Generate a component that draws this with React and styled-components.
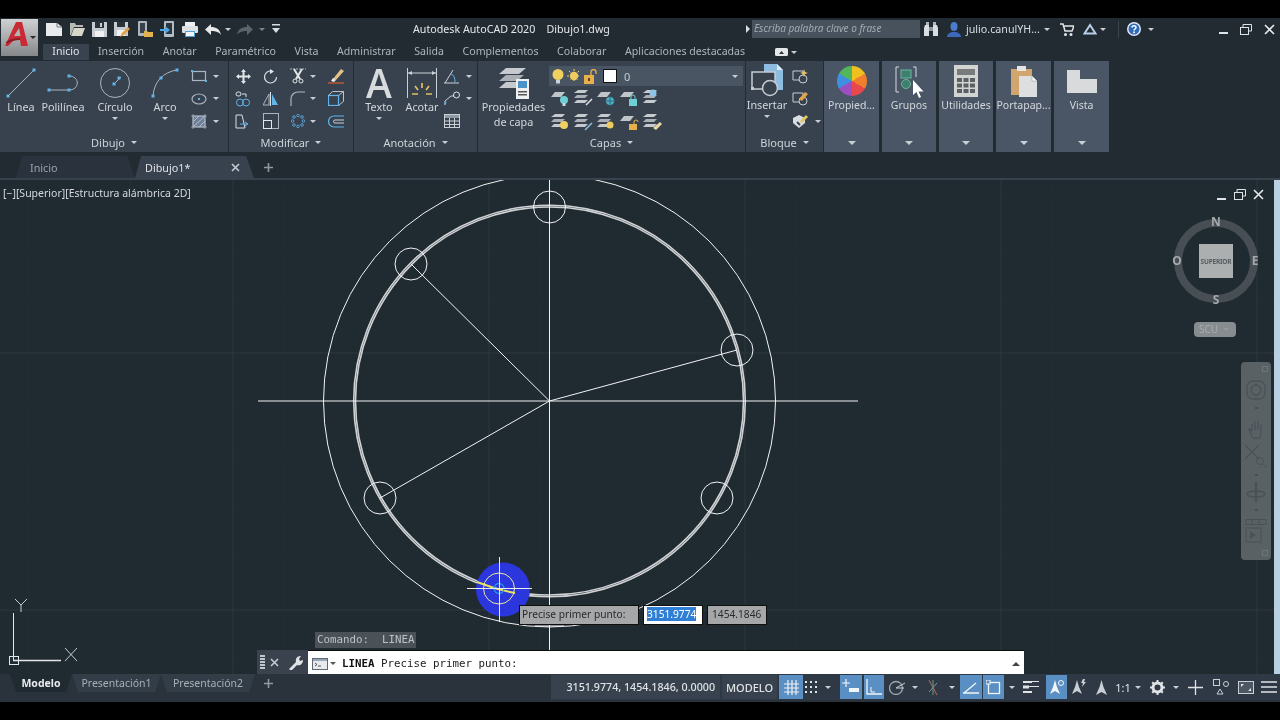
import React from "react";
import styled, { createGlobalStyle } from "styled-components";

const GlobalStyle = createGlobalStyle`
  html, body { margin: 0; padding: 0; background: #000; }
`;

const Root = styled.div`
  width: 1280px;
  height: 720px;
  background: #000;
  display: flex;
  flex-direction: column;
  overflow: hidden;
  position: relative;
  font-family: "Noto Sans", "Open Sans", sans-serif;
  font-size: 11px;
  color: #d4d9de;
  filter: blur(0.3px);
`;

const TopBlack = styled.div`
  height: 18px;
  flex: none;
`;

const BottomBlack = styled.div`
  flex: 1;
`;

/* ---------- drawing helper ---------- */
const Svg = styled.svg`
  display: block;
  flex: none;
`;

const Pic = ({ w, h, children }) => (
  <Svg width={w} height={h} viewBox={`0 0 ${w} ${h}`} fill="none">
    {children}
  </Svg>
);

const Caret = styled.span`
  display: inline-block;
  flex: none;
  width: 0;
  height: 0;
  border-left: 3px solid transparent;
  border-right: 3px solid transparent;
  border-top: 3px solid ${(p) => p.$c || "#c8ced4"};
`;

const Slot = styled.div`
  width: ${(p) => p.$w}px;
  margin-left: ${(p) => p.$ml || 0}px;
  flex: none;
  height: 100%;
  display: flex;
  align-items: center;
  justify-content: center;
`;

/* ---------- app button ---------- */
const AppButton = styled.div`
  position: absolute;
  left: 1px;
  top: 19px;
  width: 37px;
  height: 37px;
  background: linear-gradient(#cfd0d1, #85888a);
  padding: 3px 0 0 4px;
  box-sizing: border-box;
`;

const AppCaret = styled(Caret)`
  position: absolute;
  right: 2px;
  top: 17px;
  border-top-color: #2b2b2b;
`;

/* ---------- title bar ---------- */
const TitleBar = styled.div`
  height: 26px;
  flex: none;
  background: #222b32;
  display: flex;
  align-items: center;
  padding: 0 0 4px 43px;
  box-sizing: border-box;
`;

const TitleText = styled.div`
  width: 332px;
  margin-left: 127px;
  flex: none;
  font-size: 10.7px;
  color: #e4e7ea;
  white-space: pre;
`;

const SearchBox = styled.div`
  width: 168px;
  height: 18px;
  flex: none;
  background: #47525c;
  color: #a3abb3;
  font-style: italic;
  font-size: 10px;
  line-height: 17px;
  padding-left: 2px;
  box-sizing: border-box;
  white-space: nowrap;
`;

const UserName = styled.div`
  width: 78px;
  flex: none;
  font-size: 10.7px;
  color: #d8dde2;
  white-space: nowrap;
`;

const TitleRule = styled.div`
  width: 1px;
  height: 17px;
  background: #3b4550;
  flex: none;
`;

const Arrow = styled.span`
  width: 0;
  height: 0;
  border-top: 4px solid transparent;
  border-bottom: 4px solid transparent;
  border-left: 4px solid #d8dde2;
`;

/* ---------- ribbon tabs ---------- */
const MenuRow = styled.div`
  height: 16px;
  flex: none;
  background: #222b32;
  display: flex;
  align-items: stretch;
  padding-left: 43px;
`;

const MenuTab = styled.div`
  padding: 0 9.3px;
  background: ${(p) => (p.$active ? "#394350" : "transparent")};
  color: ${(p) => (p.$active ? "#e2e6ea" : "#aeb6bd")};
  font-size: 10.6px;
  line-height: 14px;
  white-space: nowrap;
`;

/* ---------- ribbon ---------- */
const Ribbon = styled.div`
  height: 92px;
  flex: none;
  background: #222b32;
  display: flex;
  padding-top: 1px;
  box-sizing: border-box;
`;

const Panel = styled.div`
  width: ${(p) => p.$w}px;
  margin-right: 1px;
  flex: none;
  background: #38424f;
  display: flex;
  flex-direction: column;
`;

const PanelBody = styled.div`
  height: 74px;
  flex: none;
  display: flex;
`;

const PanelTitle = styled.div`
  flex: 1;
  display: flex;
  align-items: center;
  justify-content: center;
  gap: 6px;
  font-size: 11px;
  color: #ccd2d8;
  padding-bottom: 3px;
`;

const Tool = styled.div`
  width: ${(p) => p.$w}px;
  flex: none;
  display: flex;
  flex-direction: column;
  align-items: center;
  padding-top: ${(p) => p.$top ?? 5}px;
  box-sizing: border-box;
`;

const ToolIcon = styled.div`
  height: 33px;
  display: flex;
  align-items: center;
  justify-content: center;
`;

const ToolLabel = styled.div`
  font-size: 10.8px;
  line-height: 15px;
  color: #d2d7dc;
  text-align: center;
  white-space: nowrap;
`;

const ToolCaret = styled(Caret)`
  margin-top: 3px;
`;

const BigLetter = styled.div`
  font-family: "Open Sans", sans-serif;
  font-size: 39px;
  font-weight: 600;
  line-height: 33px;
  color: #d8dbde;
`;

const SmallGrid = styled.div`
  width: ${(p) => p.$w}px;
  flex: none;
  display: grid;
  grid-template-columns: ${(p) => p.$cols};
  grid-auto-rows: 22.5px;
  padding-top: 4px;
  box-sizing: border-box;
  justify-items: center;
  align-items: center;
`;

const LayerColumn = styled.div`
  flex: 1;
  display: flex;
  flex-direction: column;
  padding: 5px 2px 0 0;
`;

const LayerCombo = styled.div`
  height: 20px;
  background: #4a5563;
  display: flex;
  align-items: center;
  padding: 0 5px 0 3px;
  gap: 3px;
  font-size: 11px;
  color: #c6ccd2;
`;

const ColorSwatch = styled.div`
  width: 12px;
  height: 12px;
  background: #fff;
  border: 1px solid #111;
  margin: 0 4px 0 2px;
`;

const ComboCaret = styled(Caret)`
  margin-left: auto;
`;

const LayerRow = styled.div`
  height: 24px;
  display: flex;
  align-items: center;
  padding-left: 2px;
  gap: 3px;
`;

const Collapsed = styled.div`
  width: ${(p) => p.$w}px;
  margin-right: ${(p) => p.$mr ?? 3}px;
  flex: none;
  background: #4a5666;
  display: flex;
  flex-direction: column;
  align-items: center;
  padding-top: 4px;
  box-sizing: border-box;
`;

const CollapsedIcon = styled.div`
  height: 32px;
  display: flex;
  align-items: center;
  justify-content: center;
`;

const CollapsedLabel = styled.div`
  font-size: 10.5px;
  line-height: 16px;
  color: #d2d7dc;
  white-space: nowrap;
`;

const CollapsedCaret = styled(Caret)`
  margin-top: auto;
  margin-bottom: 7px;
  border-left-width: 4px;
  border-right-width: 4px;
  border-top-width: 4px;
`;

const Wheel = styled.div`
  width: 30px;
  height: 30px;
  border-radius: 50%;
  background: conic-gradient(
    #f0c020 0 60deg,
    #ef7f2c 60deg 120deg,
    #e8484c 120deg 180deg,
    #9b4fc0 180deg 240deg,
    #3f8fe0 240deg 300deg,
    #52b65a 300deg 360deg
  );
`;

/* ---------- document tabs ---------- */
const DocRow = styled.div`
  height: 28px;
  flex: none;
  background: #222b32;
  border-bottom: 2px solid #38424f;
  box-sizing: border-box;
  display: flex;
  align-items: flex-end;
  padding-left: 16px;
`;

const DocTab = styled.div`
  width: ${(p) => p.$w}px;
  height: 22px;
  flex: none;
  display: flex;
  align-items: center;
  justify-content: space-between;
  padding: 0 14px 0 ${(p) => p.$pl || 14}px;
  box-sizing: border-box;
  background: ${(p) => (p.$active ? "#38424f" : "#2a333d")};
  color: ${(p) => (p.$active ? "#dfe3e7" : "#9aa3ab")};
  font-size: 10.8px;
  clip-path: polygon(6px 0, calc(100% - 8px) 0, 100% 100%, 0 100%);
`;

const PlusGlyph = styled.div`
  flex: none;
  width: 28px;
  height: 22px;
  display: flex;
  align-items: center;
  justify-content: center;
`;

/* ---------- viewport ---------- */
const Viewport = styled.div`
  height: 494px;
  flex: none;
  position: relative;
  background: #202a31;
  overflow: hidden;
`;

const Canvas = styled.svg`
  position: absolute;
  left: 0;
  top: 0;
`;

const ScrollEdge = styled.div`
  position: absolute;
  right: 0;
  top: 0;
  bottom: 0;
  width: 6px;
  background: #b9cfe3;
`;

const ViewLabel = styled.div`
  position: absolute;
  left: 3px;
  top: 6px;
  font-size: 10.5px;
  line-height: 15px;
  color: #d4d9de;
  white-space: nowrap;
`;

const ViewControls = styled.div`
  position: absolute;
  left: 1217px;
  top: 9px;
  display: flex;
  gap: 7px;
  align-items: center;
`;

const Compass = styled.div`
  position: absolute;
  left: 1174px;
  top: 39px;
  width: 84px;
  height: 84px;
  border-radius: 50%;
  border: 8px solid #474f55;
  box-sizing: border-box;
`;

const CubeFace = styled.div`
  position: absolute;
  left: 17px;
  top: 17px;
  width: 34px;
  height: 34px;
  background: #abafaf;
  color: #565c60;
  font-size: 6.5px;
  font-weight: 700;
  display: flex;
  align-items: center;
  justify-content: center;
  letter-spacing: -0.2px;
`;

const CompassMark = styled.div`
  position: absolute;
  left: ${(p) => p.$x}px;
  top: ${(p) => p.$y}px;
  width: 16px;
  height: 16px;
  transform: translate(-50%, -50%);
  text-align: center;
  font-size: 12px;
  line-height: 16px;
  font-weight: 700;
  color: #a4a9ab;
`;

const ScuBox = styled.div`
  position: absolute;
  left: 1194px;
  top: 142px;
  width: 42px;
  height: 15px;
  border-radius: 4px;
  background: #868c8f;
  color: #a9aeb0;
  font-size: 10px;
  line-height: 15px;
  padding-left: 5px;
  box-sizing: border-box;
  display: flex;
  align-items: center;
  gap: 5px;
`;

const NavBar = styled.div`
  position: absolute;
  left: 1241px;
  top: 182px;
  width: 30px;
  height: 198px;
  border-radius: 4px;
  background: #596165;
  display: flex;
  flex-direction: column;
  align-items: center;
  padding-top: 18px;
  box-sizing: border-box;
`;

const NavItem = styled.div`
  margin-top: ${(p) => p.$mt || 0}px;
  flex: none;
`;

const NavDot = styled.div`
  width: 3px;
  height: 2px;
  margin-top: ${(p) => p.$mt || 0}px;
  background: #464e53;
  flex: none;
`;

const NavCorner = styled.div`
  position: absolute;
  right: 3px;
  width: 6px;
  height: 6px;
  border: 1px solid #6d7579;
  box-sizing: border-box;
  ${(p) => (p.$bottom ? "bottom: 4px;" : "top: 4px;")}
`;

const Tooltip = styled.div`
  position: absolute;
  top: 425px;
  left: ${(p) => p.$x}px;
  width: ${(p) => p.$w}px;
  height: 20px;
  box-sizing: border-box;
  background: ${(p) => (p.$input ? "#fff" : "#a5a7a8")};
  border: 1px solid #0f0f0f;
  color: #2a2a2a;
  font-size: 10.2px;
  line-height: 16px;
  padding-left: ${(p) => p.$pad ?? 2}px;
  white-space: nowrap;
`;

const Selected = styled.span`
  background: #2f7fd6;
  color: #fff;
`;

const History = styled.div`
  position: absolute;
  left: 315px;
  top: 452px;
  width: 101px;
  height: 16px;
  background: #4a5257;
  color: #bcc1c4;
  font-family: "DejaVu Sans Mono", monospace;
  font-size: 10.8px;
  line-height: 16px;
  padding-left: 2px;
  box-sizing: border-box;
  white-space: pre;
`;

const CommandBar = styled.div`
  position: absolute;
  left: 257px;
  bottom: 0;
  width: 767px;
  height: 24px;
  display: flex;
`;

const CommandTools = styled.div`
  width: 51px;
  flex: none;
  background: #39424d;
  display: flex;
  align-items: center;
  padding-left: 3px;
  gap: 5px;
  box-sizing: border-box;
`;

const CommandInput = styled.div`
  flex: 1;
  background: #fff;
  border-top: 1px solid #0c0c0c;
  display: flex;
  align-items: center;
  padding: 2px 4px 0;
  font-family: "DejaVu Sans Mono", monospace;
  font-size: 10.8px;
  color: #222;
  white-space: pre;
`;

const CommandCaret = styled(Caret)`
  margin: 0 6px 0 2px;
`;

const Strong = styled.b`
  color: #111;
`;

const ArrowUp = styled.span`
  margin-left: auto;
  width: 0;
  height: 0;
  border-left: 4px solid transparent;
  border-right: 4px solid transparent;
  border-bottom: 4px solid #444;
`;

/* ---------- layout tabs + status ---------- */
const BottomRow = styled.div`
  height: 28px;
  flex: none;
  background: #2a333c;
  display: flex;
  position: relative;
`;

const LayoutTabs = styled.div`
  width: 551px;
  flex: none;
  display: flex;
  align-items: flex-start;
  padding-left: 10px;
  box-sizing: border-box;
`;

const LayoutTab = styled.div`
  width: ${(p) => p.$w}px;
  height: 18px;
  flex: none;
  text-align: center;
  font-size: 10.5px;
  line-height: 18px;
  font-weight: ${(p) => (p.$active ? 700 : 400)};
  color: ${(p) => (p.$active ? "#e9ecef" : "#a7afb6")};
  background: ${(p) => (p.$active ? "#202a31" : "#333d48")};
  clip-path: polygon(0 0, 100% 0, calc(100% - 6px) 100%, 6px 100%);
`;

const LayoutPlus = styled(Slot)`
  height: 18px;
`;

const StatusBar = styled.div`
  flex: 1;
  height: 26px;
  background: #2f3945;
  display: flex;
  align-items: center;
`;

const Stat = styled.div`
  width: ${(p) => p.$w}px;
  margin-left: ${(p) => p.$ml || 0}px;
  height: 24px;
  flex: none;
  display: flex;
  align-items: center;
  justify-content: ${(p) => (p.$end ? "flex-end" : "center")};
  padding-right: ${(p) => (p.$end ? 5 : 0)}px;
  box-sizing: border-box;
  gap: ${(p) => p.$gap || 0}px;
  background: ${(p) => (p.$on ? "#5a8fc4" : p.$box ? "#38424f" : "transparent")};
  color: #dfe3e7;
  font-size: ${(p) => p.$fs || 11}px;
  font-weight: ${(p) => (p.$box ? 500 : 400)};
  white-space: nowrap;
`;

/* ---------- icons ---------- */
const B = "#5fb4ea";
const ST = "#a9b5c0";
const NAV = "#495257";

const Dot = ({ x, y }) => <rect x={x - 1.5} y={y - 1.5} width="3" height="3" fill={B} />;

const icons = {
  logo: (
    <Pic w={24} h={24}>
      <path d="M11 0h6l6 24h-7l-1-6H9l-6 6H0z" fill="#c92b34" />
      <path d="M14 6l1.5 8H9z" fill="#b3b3b3" />
      <path d="M1 20c4-3 9-4 14-4v2c-5 0-10 1-13 4z" fill="#8a1c22" />
    </Pic>
  ),
  newDoc: (
    <Pic w={16} h={13}>
      <path d="M0 0h11l5 4v9H0z" fill="#e8eaeb" />
      <path d="M11 0v4h5" stroke="#777" />
    </Pic>
  ),
  open: (
    <Pic w={16} h={13}>
      <path d="M1 0h5l1 2h7v2H5L2 12H1z" fill="#b6b9b4" />
      <path d="M5 5h11l-3 8H2z" fill="#d5d6c8" />
    </Pic>
  ),
  save: (
    <Pic w={15} h={15}>
      <rect width="15" height="15" fill="#c6ccd1" />
      <rect x="3" y="0" width="9" height="6" fill="#2a333a" />
      <rect x="8" y="1" width="2" height="4" fill="#c6ccd1" />
      <rect x="3" y="9" width="9" height="6" fill="#f0f1f2" />
    </Pic>
  ),
  saveAs: (
    <Pic w={16} h={15}>
      <rect width="14" height="14" fill="#c6ccd1" />
      <rect x="3" y="0" width="8" height="5" fill="#2a333a" />
      <rect x="3" y="8" width="8" height="6" fill="#f0f1f2" />
      <path d="M6 15l2-4 6-6 2 2-6 6z" fill="#e0a040" />
    </Pic>
  ),
  webOpen: (
    <Pic w={16} h={16}>
      <rect x="1" y="0" width="9" height="15" rx="1" fill="#aeb6bc" />
      <rect x="3" y="2" width="5" height="10" fill="#38424f" />
      <path d="M7 10h3l1 1h5v5H7z" fill="#e2b24e" />
    </Pic>
  ),
  webSave: (
    <Pic w={14} h={16}>
      <rect x="4" y="0" width="10" height="16" rx="1" fill="#b3bcc3" />
      <rect x="6" y="2" width="6" height="11" fill="#2c3640" />
      <path d="M0 8h5V5l5 4-5 4v-3H0z" fill="#4ba8e6" />
    </Pic>
  ),
  print: (
    <Pic w={16} h={15}>
      <rect x="3" y="0" width="10" height="4" fill="#eceeef" />
      <rect x="0" y="4" width="16" height="7" rx="1" fill="#dfe2e4" />
      <rect x="3" y="9" width="10" height="6" fill="#4ea2d8" />
      <rect x="4" y="10" width="8" height="4" fill="#f4f5f6" />
    </Pic>
  ),
  undo: (
    <Pic w={16} h={11}>
      <path d="M6 0v3c5 0 9 2 10 8-2-3-5-4-10-4v4L0 5.5z" fill="#e6e8ea" />
    </Pic>
  ),
  redo: (
    <Pic w={16} h={11}>
      <path d="M10 0v3C5 3 1 5 0 11c2-3 5-4 10-4v4l6-5.5z" fill="#5b646c" />
    </Pic>
  ),
  custom: (
    <Pic w={8} h={10}>
      <rect width="8" height="1.5" fill="#d8dde2" />
      <path d="M0 4h8L4 9z" fill="#d8dde2" />
    </Pic>
  ),
  binoculars: (
    <Pic w={14} h={14}>
      <path d="M1 3h4v11H0V6zM9 3h4l1 3v8H9z" fill="#d9dee2" />
      <rect x="2" y="0" width="3" height="3" fill="#aeb5bb" />
      <rect x="9" y="0" width="3" height="3" fill="#aeb5bb" />
      <rect x="5" y="5" width="4" height="4" fill="#8d959c" />
    </Pic>
  ),
  user: (
    <Pic w={14} h={15}>
      <ellipse cx="7" cy="4.5" rx="3.5" ry="4.5" fill="#4a7cd0" />
      <path d="M0 15c0-3 3-5 7-5s7 2 7 5z" fill="#3d68bc" />
    </Pic>
  ),
  cart: (
    <Pic w={14} h={13}>
      <path d="M0 1h3l2 7h7l2-5H4" stroke="#e2e6e9" strokeWidth="1.5" />
      <circle cx="5.5" cy="11.5" r="1.5" fill="#e2e6e9" />
      <circle cx="11" cy="11.5" r="1.5" fill="#e2e6e9" />
    </Pic>
  ),
  a360: (
    <Pic w={14} h={12}>
      <path d="M7 2L1.5 10.5h11z" stroke="#b8cdea" strokeWidth="2" />
    </Pic>
  ),
  help: (
    <Pic w={14} h={14}>
      <circle cx="7" cy="7" r="7" fill="#dfe6f2" />
      <circle cx="7" cy="7" r="5.5" fill="#2e69b8" />
      <path d="M5 5.5C5 3 9 3 9 5.5 9 7 7 7 7 8.5" stroke="#fff" strokeWidth="1.5" />
      <rect x="6.2" y="9.5" width="1.7" height="1.7" fill="#fff" />
    </Pic>
  ),
  winMin: (
    <Pic w={10} h={10}>
      <rect x="0" y="8" width="9" height="2" fill="#dfe3e6" />
    </Pic>
  ),
  winRestore: (
    <Pic w={12} h={11}>
      <rect x="0.5" y="3.5" width="8" height="7" stroke="#dfe3e6" />
      <path d="M3 3V0.5h8.5V7H9" stroke="#dfe3e6" />
    </Pic>
  ),
  winClose: (
    <Pic w={11} h={11}>
      <path d="M1 1l9 9M10 1l-9 9" stroke="#e6e9eb" strokeWidth="1.6" />
    </Pic>
  ),

  line: (
    <Pic w={30} h={30}>
      <path d="M2 28L28 2" stroke={ST} />
      <Dot x={2} y={28} />
      <Dot x={28} y={2} />
    </Pic>
  ),
  poly: (
    <Pic w={32} h={18}>
      <path d="M2 16h20c11 0 11-14 0-14" stroke={ST} />
      <Dot x={2} y={16} />
      <Dot x={22} y={16} />
      <Dot x={22} y={2} />
    </Pic>
  ),
  circle: (
    <Pic w={32} h={32}>
      <circle cx="16" cy="16" r="14.5" stroke={ST} />
      <path d="M16 16l6-6" stroke={ST} />
      <Dot x={15} y={17} />
      <Dot x={20} y={11} />
    </Pic>
  ),
  arc: (
    <Pic w={28} h={30}>
      <path d="M2 28C3 14 12 4 26 2" stroke={ST} />
      <Dot x={2} y={28} />
      <Dot x={10} y={10} />
      <Dot x={26} y={2} />
    </Pic>
  ),
  rect: (
    <Pic w={16} h={12}>
      <rect x="1.5" y="1.5" width="13" height="9" stroke={ST} strokeWidth="1.2" />
      <rect x="0" y="0" width="2" height="2" fill={B} />
      <rect x="14" y="10" width="2" height="2" fill={B} />
    </Pic>
  ),
  ellipse: (
    <Pic w={16} h={12}>
      <ellipse cx="8" cy="6" rx="7" ry="5" stroke={ST} strokeWidth="1.2" />
      <rect x="7" y="5" width="2" height="2" fill={B} />
    </Pic>
  ),
  hatch: (
    <Pic w={16} h={15}>
      <rect x="2" y="2" width="12" height="11" fill="#6d7f99" stroke={ST} />
      <path d="M2 8l6-6M2 13L14 2M8 13l6-6" stroke="#b5bfca" />
      <path d="M0 2h16M0 13h16M2 0v15M14 0v15" stroke={ST} strokeWidth="0.7" />
    </Pic>
  ),
  move: (
    <Pic w={15} h={15}>
      <path d="M7.5 0L10 3H8.5v3.5H12V5l3 2.5L12 10V8.5H8.5V12H10l-2.5 3L5 12h1.5V8.5H3V10L0 7.5 3 5v1.5h3.5V3H5z" fill="#e2e6e9" />
    </Pic>
  ),
  rotate: (
    <Pic w={15} h={15}>
      <path d="M9 2.2A6 6 0 1 0 13.5 8" stroke="#d8dde1" strokeWidth="1.2" />
      <path d="M7 0l4 2.5L7 5z" fill="#e2e6e9" />
    </Pic>
  ),
  trim: (
    <Pic w={16} h={16}>
      <path d="M0 1h16" stroke={ST} strokeDasharray="2 1" />
      <path d="M4 1l6 10M12 1L6 11" stroke="#e2e6e9" strokeWidth="2" />
      <circle cx="5" cy="13" r="2" stroke="#e2e6e9" />
      <circle cx="11" cy="13" r="2" stroke="#e2e6e9" />
    </Pic>
  ),
  erase: (
    <Pic w={16} h={16}>
      <path d="M5 11L13 1l3 2-8 9z" fill="#e7c184" />
      <path d="M3 13l2-3 3 2-2 2z" fill="#e8eaec" />
      <path d="M0 15h16" stroke="#d05a2c" strokeWidth="1.3" />
    </Pic>
  ),
  copy: (
    <Pic w={16} h={16}>
      <circle cx="5" cy="11.5" r="3.5" stroke={B} />
      <circle cx="11" cy="11.5" r="3.5" stroke={B} />
      <rect x="1" y="1" width="5" height="4" rx="2" stroke="#d8dde1" />
      <path d="M7 3h4v3" stroke="#d8dde1" />
    </Pic>
  ),
  mirror: (
    <Pic w={15} h={14}>
      <path d="M6 2v11H0z" stroke={ST} />
      <path d="M9 2v11h6z" fill={B} />
      <path d="M7.5 0v14" stroke="#e2e6e9" />
    </Pic>
  ),
  fillet: (
    <Pic w={16} h={16}>
      <path d="M1 15V8c0-4 3-7 7-7h7" stroke={ST} strokeWidth="1.2" />
    </Pic>
  ),
  cube: (
    <Pic w={16} h={15}>
      <rect x="0.5" y="4.5" width="10" height="10" stroke={B} strokeWidth="1.2" />
      <path d="M0.5 4.5l4-4h11v10l-5 4M10.5 4.5l5-4" stroke="#b9c3cc" />
    </Pic>
  ),
  stretch: (
    <Pic w={16} h={15}>
      <path d="M1 14V1h6l3 13z" stroke="#d8dde1" />
      <path d="M5 10h7M10 8l3 2-3 2" stroke={B} />
    </Pic>
  ),
  scale: (
    <Pic w={16} h={16}>
      <rect x="0.5" y="0.5" width="15" height="15" stroke={ST} />
      <rect x="0.5" y="7.5" width="8" height="8" stroke="#e2e6e9" />
    </Pic>
  ),
  arrayDots: (
    <Pic w={14} h={14}>
      {[[7, 1.5], [11, 3], [12.5, 7], [11, 11], [7, 12.5], [3, 11], [1.5, 7], [3, 3]].map(([x, y], i) => (
        <circle key={i} cx={x} cy={y} r="1.3" stroke={B} strokeWidth="0.8" />
      ))}
    </Pic>
  ),
  offset: (
    <Pic w={17} h={13}>
      <path d="M16 1H6a5.5 5.5 0 0 0 0 11h10" stroke={B} strokeWidth="1.2" />
      <path d="M16 5H7a1.5 1.5 0 0 0 0 3h9" stroke="#c9d2da" />
    </Pic>
  ),
  dim: (
    <Pic w={32} h={32}>
      <path d="M1.5 1v30M30.5 1v30" stroke="#c9cfd5" />
      <path d="M2 6h28" stroke="#c9cfd5" />
      <path d="M2 6l4-2v4zM30 6l-4-2v4z" fill="#c9cfd5" />
      <path d="M16 16v5M9 19l3 4M23 19l-3 4M6 27h6M20 27h6" stroke="#e0c060" strokeWidth="1.7" />
    </Pic>
  ),
  angle: (
    <Pic w={16} h={15}>
      <path d="M0 14h15M1 14L9 1" stroke="#c9d2da" />
      <path d="M7 5c3 1 4 4 4 8" stroke={B} />
    </Pic>
  ),
  leader: (
    <Pic w={16} h={16}>
      <path d="M1 14v-4l6-5h3" stroke="#c9d2da" />
      <circle cx="12.5" cy="4" r="3" stroke="#e2e6e9" />
      <path d="M1 14l2-3-3 1z" fill={B} />
    </Pic>
  ),
  table: (
    <Pic w={16} h={14}>
      <rect x="0.5" y="0.5" width="15" height="13" stroke="#c9cfd5" />
      <rect x="1" y="1" width="14" height="3" fill="#8f9aa5" />
      <path d="M0 7h16M0 10.5h16M5.5 4v10M10.5 4v10" stroke="#c9cfd5" />
    </Pic>
  ),
  layerProps: (
    <Pic w={32} h={34}>
      <path d="M8 2h20l-7 6H1z" fill="#c6cace" />
      <path d="M8 9h18l-7 6H1z" fill="#aab0b5" />
      <path d="M8 16h14l-4 6H1z" fill="#c6cace" />
      <rect x="18" y="13" width="13" height="20" fill="#eef0f1" />
      <rect x="20" y="15" width="9" height="7" fill="#4a92c8" />
      <rect x="20" y="25" width="9" height="1.5" fill="#555" />
      <rect x="20" y="28" width="9" height="1.5" fill="#555" />
    </Pic>
  ),
  bulb: (
    <Pic w={12} h={15}>
      <circle cx="6" cy="5.5" r="5.5" fill="#f0d060" />
      <rect x="4" y="11" width="4" height="3.5" fill="#c9d2da" />
    </Pic>
  ),
  sun: (
    <Pic w={14} h={14}>
      <circle cx="7" cy="7" r="4.2" fill="#eecb62" />
      <path d="M7 0v14M0 7h14M2 2l10 10M12 2L2 12" stroke="#eecb62" strokeDasharray="2 8" />
    </Pic>
  ),
  lock: (
    <Pic w={14} h={15}>
      <rect x="0" y="6" width="10" height="9" fill="#e7b04c" />
      <path d="M7 6V3a2.5 2.5 0 0 1 5 0v2" stroke="#e7b04c" strokeWidth="1.3" />
      <rect x="4" y="9" width="2" height="3" fill="#5c4420" />
    </Pic>
  ),
  insert: (
    <Pic w={32} h={33}>
      <path d="M13 0h13l6 6v20H13z" fill="#8cbde0" />
      <path d="M26 0v6h6" fill="#dcebf5" />
      <rect x="1" y="8" width="23" height="17" fill="#38424f" stroke="#c6ccd2" strokeWidth="1.5" />
      <circle cx="19" cy="24" r="7.5" fill="#38424f" stroke="#c6ccd2" strokeWidth="1.5" />
      <rect x="0" y="23" width="3" height="3" fill="#c6ccd2" />
    </Pic>
  ),
  blockA: (
    <Pic w={16} h={15}>
      <path d="M1 2h10v9H1z" stroke="#c6ccd2" />
      <circle cx="11" cy="10" r="4" stroke="#c6ccd2" fill="#38424f" />
      <path d="M11 3l1-3 1 3 3 1-3 1-1 3-1-3-3-1z" fill="#e8c45c" />
    </Pic>
  ),
  blockB: (
    <Pic w={16} h={15}>
      <path d="M1 2h10v9H1z" stroke="#c6ccd2" />
      <circle cx="11" cy="10" r="4" stroke="#c6ccd2" fill="#38424f" />
      <path d="M7 8l6-7 3 2-6 7z" fill="#e6a24a" />
    </Pic>
  ),
  blockC: (
    <Pic w={16} h={15}>
      <path d="M1 4l6-3 6 3v5l-6 5-6-5z" fill="#d8dde1" />
      <path d="M5 8l3 3" stroke="#38424f" strokeWidth="2" />
      <path d="M8 7l6-6 2 2-6 6z" fill="#e8c45c" />
    </Pic>
  ),
  groups: (
    <Pic w={30} h={33}>
      <path d="M5 2H2v25h3M19 2h3v10" stroke="#d4d9dd" />
      <rect x="7" y="5" width="10" height="8" fill="#3f7f70" stroke="#68b89c" />
      <circle cx="12" cy="19" r="4.5" fill="#3f7f70" stroke="#68b89c" />
      <path d="M19 15v15l3.5-3 2.5 6 2-1-2.5-5.5h5z" fill="#fff" />
    </Pic>
  ),
  calc: (
    <Pic w={24} h={32}>
      <rect width="24" height="32" fill="#d2d4d2" />
      <rect x="3" y="4" width="18" height="6" fill="#777b7c" />
      {[13, 18.5, 24].map((y) =>
        [3, 9.5, 16].map((x) => <rect key={`${x}-${y}`} x={x} y={y} width="5" height="4" fill="#5b6064" />)
      )}
    </Pic>
  ),
  clipboard: (
    <Pic w={26} h={32}>
      <rect x="0" y="4" width="21" height="26" fill="#d0a56e" />
      <rect x="6" y="1" width="9" height="5" fill="#e3e5e6" />
      <path d="M8 11h13l5 5v16H8z" fill="#dcdedf" />
      <path d="M21 11v5h5" fill="#fff" stroke="#888" strokeWidth="0.5" />
    </Pic>
  ),
  vista: (
    <Pic w={30} h={23}>
      <path d="M0 0h13v9h17v14H0z" fill="#d8dadb" />
    </Pic>
  ),
  close: (
    <Pic w={9} h={9}>
      <path d="M1 1l7 7M8 1L1 8" stroke="#c4cad0" strokeWidth="1.6" />
    </Pic>
  ),
  plus: (
    <Pic w={9} h={9}>
      <path d="M4.5 0v9M0 4.5h9" stroke="#8f99a2" strokeWidth="1.6" />
    </Pic>
  ),
  wrench: (
    <Pic w={15} h={15}>
      <path d="M1 14l7-7c-1-3 1-6 5-6l-2 3 1 2 3-1c0 4-3 6-6 5l-6 6z" fill="#dfe3e6" />
    </Pic>
  ),
  grip: (
    <Pic w={5} h={16}>
      {[1, 4, 7, 10, 13].map((y) => (
        <rect key={y} y={y} width="5" height="2" fill="#c0c6cc" />
      ))}
    </Pic>
  ),
  terminal: (
    <Pic w={16} h={12}>
      <rect x="0.5" y="0.5" width="15" height="11" fill="#e6eaee" stroke="#5d6872" />
      <rect x="1" y="1" width="14" height="2" fill="#9aa6b0" />
      <path d="M3 5l2 1.5L3 8M6 8h3" stroke="#333" strokeWidth="0.8" />
    </Pic>
  ),
  grid: (
    <Pic w={15} h={15}>
      <path d="M4 0v15M8 0v15M12 0v15M0 4h15M0 8h15M0 12h15" stroke="#eef2f5" strokeWidth="1.2" />
    </Pic>
  ),
  dots: (
    <Pic w={13} h={13}>
      {[1, 6, 11].map((y) =>
        [1, 6, 11].map((x) => <rect key={`${x}-${y}`} x={x - 1} y={y - 1} width="2" height="2" fill="#dfe3e6" />)
      )}
    </Pic>
  ),
  infer: (
    <Pic w={18} h={16}>
      <path d="M4 0v8M0 4h8" stroke="#f2f5f7" strokeWidth="1.2" />
      <rect x="7" y="9" width="10" height="4" fill="#f2f5f7" />
    </Pic>
  ),
  ortho: (
    <Pic w={16} h={16}>
      <path d="M1 0v15h15" stroke="#f2f5f7" strokeWidth="1.3" />
      <path d="M5 8v5h4" stroke="#f2f5f7" />
    </Pic>
  ),
  polar: (
    <Pic w={16} h={15}>
      <circle cx="7" cy="8" r="6.5" stroke="#9da6ae" strokeWidth="1.3" />
      <path d="M7 8l9-5M7 8h8" stroke="#c9cfd5" />
    </Pic>
  ),
  osnap: (
    <Pic w={14} h={15}>
      <path d="M3 0l8 15" stroke="#a0605c" strokeWidth="1.2" />
      <path d="M7 0v15" stroke="#5f8c76" strokeWidth="1.2" />
      <path d="M11 3L3 12" stroke="#8a929a" />
    </Pic>
  ),
  iso: (
    <Pic w={16} h={13}>
      <path d="M0 12h16M1 12L13 2" stroke="#f2f5f7" strokeWidth="1.3" />
    </Pic>
  ),
  snap: (
    <Pic w={15} h={15}>
      <rect x="2.5" y="2.5" width="11" height="11" stroke="#f2f5f7" strokeWidth="1.3" />
      <rect x="0" y="0" width="4" height="4" fill="#5a8fc4" stroke="#f2f5f7" />
    </Pic>
  ),
  lw: (
    <Pic w={16} h={12}>
      <rect y="0" width="16" height="1" fill="#dfe3e6" />
      <rect y="0" width="9" height="2" fill="#dfe3e6" />
      <rect y="5" width="16" height="1" fill="#dfe3e6" />
      <rect y="4.5" width="6" height="3" fill="#dfe3e6" />
      <rect y="10" width="9" height="2" fill="#dfe3e6" />
    </Pic>
  ),
  annot: (
    <Pic w={17} h={16}>
      <path d="M7 1l2 7 3 7-5-3-5 3 3-7z" fill="#f2f5f7" />
      <circle cx="13" cy="4" r="2.5" stroke="#f2f5f7" />
    </Pic>
  ),
  annotB: (
    <Pic w={16} h={16}>
      <path d="M6 1l2 7 3 7-5-3-5 3 3-7z" fill="#c9cfd5" />
      <path d="M12 0l-2 4h2l-1 4 4-5h-2l1-3z" fill="#c9cfd5" />
    </Pic>
  ),
  annotC: (
    <Pic w={13} h={15}>
      <path d="M6.5 0l2 7 3.5 8-5.500-3L1 15l3.500-8z" fill="#c9cfd5" />
    </Pic>
  ),
  gear: (
    <Pic w={15} h={15}>
      <circle cx="7.5" cy="7.5" r="4.5" stroke="#dfe3e6" strokeWidth="3" />
      <path d="M7.5 0v15M0 7.5h15M2.2 2.2l10.6 10.6M12.8 2.2L2.2 12.8" stroke="#dfe3e6" strokeWidth="2" strokeDasharray="2.5 10" />
    </Pic>
  ),
  cross: (
    <Pic w={15} h={15}>
      <path d="M7.5 0v15M0 7.5h15" stroke="#dfe3e6" strokeWidth="1.3" />
    </Pic>
  ),
  shapes: (
    <Pic w={16} h={16}>
      <rect x="0.5" y="0.5" width="6" height="6" stroke="#c9cfd5" />
      <circle cx="13" cy="5" r="2.5" stroke="#c9cfd5" />
      <path d="M7 10l3 5H4z" stroke="#c9cfd5" />
    </Pic>
  ),
  full: (
    <Pic w={16} h={13}>
      <rect x="0.5" y="0.5" width="15" height="12" stroke="#c9cfd5" fill="#4d5763" />
      <path d="M3 3h3L3 6zM13 10h-3l3-3z" fill="#e2e6e9" />
    </Pic>
  ),
  menu: (
    <Pic w={16} h={12}>
      <path d="M0 1h16M0 6h16M0 11h16" stroke="#dfe3e6" strokeWidth="1.5" />
    </Pic>
  ),
  navWheel: (
    <Pic w={20} h={20}>
      <rect x="1" y="1" width="18" height="18" rx="6" stroke={NAV} strokeWidth="1.3" />
      <circle cx="10" cy="10" r="5" stroke={NAV} strokeWidth="1.3" />
    </Pic>
  ),
  navHand: (
    <Pic w={17} h={21}>
      <path d="M4 12V5M7 11V2M10 11V2M13 12V5M4 12l-3-2 3 8c1 2 7 2 8 0l1-6" stroke={NAV} strokeWidth="1.3" />
    </Pic>
  ),
  navZoom: (
    <Pic w={24} h={24}>
      <path d="M1 1l14 14M15 1L1 15" stroke={NAV} strokeWidth="1.3" />
      <circle cx="16" cy="17" r="3.5" stroke={NAV} />
      <path d="M19 20l4 4" stroke={NAV} />
    </Pic>
  ),
  navOrbit: (
    <Pic w={20} h={20}>
      <path d="M10 0v20" stroke={NAV} strokeWidth="2.5" />
      <ellipse cx="10" cy="12" rx="9" ry="3" stroke={NAV} strokeWidth="1.3" />
    </Pic>
  ),
  navShow: (
    <Pic w={22} h={26}>
      <rect x="1" y="0.5" width="20" height="5" stroke={NAV} />
      <path d="M7 0v5M14 0v5" stroke={NAV} />
      <rect x="1" y="9" width="15" height="14" stroke={NAV} />
      <path d="M5 12l6 4-6 4z" fill={NAV} />
    </Pic>
  ),
};

const Small = ({ n, caret }) => (
  <>
    {icons[n]}
    {caret ? <Caret /> : <span />}
  </>
);

const LayerStack = ({ count = 1, children, w = 20 }) => (
  <Svg width={w} height={18} viewBox={`0 0 ${w} 18`} fill="none">
    {count === 1 && <path d="M4 3h10l-4 5H0z" fill="#bfc4c8" />}
    {count >= 2 && (
      <>
        <path d="M4 1h10l-3 3H0z" fill="#c6cace" />
        <path d="M3 6h11l-3 3H0z" fill="#aab0b5" />
        <path d="M3 11h11l-3 3H0z" fill="#c6cace" />
      </>
    )}
    {children}
  </Svg>
);

const minorX = Array.from({ length: 25 }, (_, i) => 28.2 + i * 51.2);
const minorY = Array.from({ length: 10 }, (_, i) => 199 + i * 51.4);

const Grid = () => (
  <g>
    <g stroke="#232d34">
      {minorX.map((x) => (
        <line key={x} x1={x} y1="180" x2={x} y2="674" />
      ))}
      {minorY.map((y) => (
        <line key={y} x1="0" y1={y} x2="1275" y2={y} />
      ))}
    </g>
    <g stroke="#2c363d">
      {[233, 489, 745, 1001, 1257].map((x) => (
        <line key={x} x1={x} y1="180" x2={x} y2="674" />
      ))}
      {[353, 610].map((y) => (
        <line key={y} x1="0" y1={y} x2="1275" y2={y} />
      ))}
    </g>
  </g>
);

const Drawing = () => (
  <g fill="none" stroke="#f2f3f4" strokeWidth="1">
    <circle cx="549.5" cy="401" r="226" />
    <circle cx="549.5" cy="401" r="195.8" stroke="#cfd2d4" strokeWidth="1.6" />
    <circle cx="549.5" cy="401" r="194" stroke="#cfd2d4" strokeWidth="1.6" />
    <line x1="258" y1="401" x2="858" y2="401" />
    <line x1="549.5" y1="180" x2="549.5" y2="650" />
    <line x1="549.5" y1="401" x2="411" y2="264" />
    <line x1="549.5" y1="401" x2="737" y2="350" />
    <line x1="549.5" y1="401" x2="380" y2="498" />
    <circle cx="549.5" cy="207" r="16" />
    <circle cx="411" cy="264" r="16" />
    <circle cx="737" cy="350" r="16" />
    <circle cx="380" cy="498" r="16" />
    <circle cx="717" cy="498" r="16" />
    <line x1="535" y1="626" x2="564" y2="626" />
  </g>
);

const Cursor = () => (
  <g fill="none">
    <circle cx="503" cy="589.5" r="27" fill="#2b36dd" />
    <path d="M477 582A195 195 0 0 0 515 593" stroke="#e7e25c" strokeWidth="2" />
    <circle cx="499" cy="588.5" r="15.5" stroke="#e8e6a8" />
    <circle cx="499" cy="588.5" r="5" stroke="#2f8fe8" strokeWidth="1.3" />
    <line x1="467" y1="588.5" x2="532" y2="588.5" stroke="#e9ecee" />
    <line x1="499.5" y1="557" x2="499.5" y2="622" stroke="#e9ecee" />
  </g>
);

const Ucs = () => (
  <g fill="none" stroke="#e3e6e8">
    <line x1="13.5" y1="613" x2="13.5" y2="660" />
    <line x1="13" y1="660.5" x2="61" y2="660.5" strokeWidth="1.3" />
    <rect x="9.5" y="656.5" width="9" height="8" />
    <path d="M65 648l12 13M77 648l-12 13" stroke="#c6ccd1" />
    <path d="M15 599l6 6 6-6M21 605v7" stroke="#c6ccd1" />
  </g>
);

const App = () => (
  <Root>
    <GlobalStyle />
    <TopBlack />
    <AppButton>
      {icons.logo}
      <AppCaret />
    </AppButton>

    <TitleBar>
      <Slot $w={22.6}>{icons.newDoc}</Slot>
      <Slot $w={22.6}>{icons.open}</Slot>
      <Slot $w={22.6}>{icons.save}</Slot>
      <Slot $w={22.6}>{icons.saveAs}</Slot>
      <Slot $w={22.6}>{icons.webOpen}</Slot>
      <Slot $w={22.6}>{icons.webSave}</Slot>
      <Slot $w={22.6}>{icons.print}</Slot>
      <Slot $w={22.8}>{icons.undo}</Slot>
      <Slot $w={8}><Caret /></Slot>
      <Slot $w={26}>{icons.redo}</Slot>
      <Slot $w={8}><Caret $c="#7b848c" /></Slot>
      <Slot $w={20}>{icons.custom}</Slot>
      <TitleText>{"Autodesk AutoCAD 2020    Dibujo1.dwg"}</TitleText>
      <Slot $w={7}><Arrow /></Slot>
      <SearchBox>Escriba palabra clave o frase</SearchBox>
      <Slot $w={22}>{icons.binoculars}</Slot>
      <Slot $w={24}>{icons.user}</Slot>
      <UserName>julio.canulYH...</UserName>
      <Slot $w={6}><Caret /></Slot>
      <Slot $w={34}>{icons.cart}</Slot>
      <Slot $w={13}>{icons.a360}</Slot>
      <Slot $w={13}><Caret /></Slot>
      <Slot $w={8} />
      <TitleRule />
      <Slot $w={31}>{icons.help}</Slot>
      <Slot $w={3}><Caret /></Slot>
      <Slot $w={65} />
      <Slot $w={12}>{icons.winMin}</Slot>
      <Slot $w={32}>{icons.winRestore}</Slot>
      <Slot $w={16}>{icons.winClose}</Slot>
    </TitleBar>

    <MenuRow>
      <MenuTab $active>Inicio</MenuTab>
      <MenuTab>Inserción</MenuTab>
      <MenuTab>Anotar</MenuTab>
      <MenuTab>Paramétrico</MenuTab>
      <MenuTab>Vista</MenuTab>
      <MenuTab>Administrar</MenuTab>
      <MenuTab>Salida</MenuTab>
      <MenuTab>Complementos</MenuTab>
      <MenuTab>Colaborar</MenuTab>
      <MenuTab>Aplicaciones destacadas</MenuTab>
      <Slot $w={16} $ml={19}>
        <Pic w={13} h={8}>
          <rect width="13" height="8" rx="1.5" fill="#e4e7ea" />
          <path d="M4 6l2.5-3L9 6z" fill="#333" />
        </Pic>
      </Slot>
      <Slot $w={10}><Caret /></Slot>
    </MenuRow>

    <Ribbon>
      <Panel $w={228}>
        <PanelBody>
          <Tool $w={42}><ToolIcon>{icons.line}</ToolIcon><ToolLabel>Línea</ToolLabel></Tool>
          <Tool $w={42}><ToolIcon>{icons.poly}</ToolIcon><ToolLabel>Polilínea</ToolLabel></Tool>
          <Tool $w={62}><ToolIcon>{icons.circle}</ToolIcon><ToolLabel>Círculo</ToolLabel><ToolCaret /></Tool>
          <Tool $w={38}><ToolIcon>{icons.arc}</ToolIcon><ToolLabel>Arco</ToolLabel><ToolCaret /></Tool>
          <SmallGrid $w={44} $cols="30px 4px">
            <Small n="rect" caret />
            <Small n="ellipse" caret />
            <Small n="hatch" caret />
          </SmallGrid>
        </PanelBody>
        <PanelTitle>Dibujo <Caret /></PanelTitle>
      </Panel>

      <Panel $w={124}>
        <PanelBody>
          <SmallGrid $w={124} $cols="28px 27px 27px 4px 42px">
            {icons.move}{icons.rotate}{icons.trim}<Caret />{icons.erase}
            {icons.copy}{icons.mirror}{icons.fillet}<Caret />{icons.cube}
            {icons.stretch}{icons.scale}{icons.arrayDots}<Caret />{icons.offset}
          </SmallGrid>
        </PanelBody>
        <PanelTitle>Modificar <Caret /></PanelTitle>
      </Panel>

      <Panel $w={123}>
        <PanelBody>
          <Tool $w={50}><ToolIcon><BigLetter>A</BigLetter></ToolIcon><ToolLabel>Texto</ToolLabel><ToolCaret /></Tool>
          <Tool $w={36}><ToolIcon>{icons.dim}</ToolIcon><ToolLabel>Acotar</ToolLabel></Tool>
          <SmallGrid $w={37} $cols="24px 10px">
            <Small n="angle" caret />
            <Small n="leader" caret />
            <Small n="table" />
          </SmallGrid>
        </PanelBody>
        <PanelTitle>Anotación <Caret /></PanelTitle>
      </Panel>

      <Panel $w={267}>
        <PanelBody>
          <Tool $w={71}>
            <ToolIcon>{icons.layerProps}</ToolIcon>
            <ToolLabel>Propiedades<br />de capa</ToolLabel>
          </Tool>
          <LayerColumn>
            <LayerCombo>
              {icons.bulb}
              {icons.sun}
              {icons.lock}
              <ColorSwatch />
              0
              <ComboCaret />
            </LayerCombo>
            <LayerRow>
              <LayerStack><circle cx="13" cy="11" r="4" fill="#6fd0d4" /><rect x="11.5" y="14" width="3" height="3" fill="#cfd4d8" /></LayerStack>
              <LayerStack count={3}><path d="M12 16l6-6" stroke="#e2e6e9" strokeWidth="1.5" /></LayerStack>
              <LayerStack><circle cx="13" cy="12" r="4" fill="#4fb0c4" /><path d="M13 7v10M8 12h10" stroke="#2c6c80" /></LayerStack>
              <LayerStack><rect x="9" y="10" width="8" height="7" fill="#6fd0d4" /><path d="M11 10V8a2 2 0 0 1 4 0v2" stroke="#6fd0d4" /></LayerStack>
              <LayerStack count={3}><circle cx="10" cy="4" r="3.5" fill="#8cc4e4" /></LayerStack>
            </LayerRow>
            <LayerRow>
              <LayerStack count={3}><circle cx="13" cy="12" r="4" fill="#f0d060" /></LayerStack>
              <LayerStack count={3}><path d="M11 17l7-7" stroke="#8cc4e4" strokeWidth="1.5" /></LayerStack>
              <LayerStack count={3}><circle cx="13" cy="12" r="3.5" fill="#eecb62" /></LayerStack>
              <LayerStack><rect x="9" y="11" width="8" height="6" fill="#e7b04c" /><path d="M14 11V9a2 2 0 0 1 4 0" stroke="#e7b04c" /></LayerStack>
              <LayerStack count={3}><path d="M10 15l7-6 2 2-6 6z" fill="#e8d8a0" /></LayerStack>
            </LayerRow>
          </LayerColumn>
        </PanelBody>
        <PanelTitle>Capas <Caret /></PanelTitle>
      </Panel>

      <Panel $w={77}>
        <PanelBody>
          <Tool $w={42} $top={3}><ToolIcon>{icons.insert}</ToolIcon><ToolLabel>Insertar</ToolLabel><ToolCaret /></Tool>
          <SmallGrid $w={35} $cols="24px 11px">
            <Small n="blockA" />
            <Small n="blockB" />
            <Small n="blockC" caret />
          </SmallGrid>
        </PanelBody>
        <PanelTitle>Bloque <Caret /></PanelTitle>
      </Panel>

      <Collapsed $w={55}>
        <CollapsedIcon><Wheel /></CollapsedIcon>
        <CollapsedLabel>Propied...</CollapsedLabel>
        <CollapsedCaret />
      </Collapsed>
      <Collapsed $w={54}>
        <CollapsedIcon>{icons.groups}</CollapsedIcon>
        <CollapsedLabel>Grupos</CollapsedLabel>
        <CollapsedCaret />
      </Collapsed>
      <Collapsed $w={54}>
        <CollapsedIcon>{icons.calc}</CollapsedIcon>
        <CollapsedLabel>Utilidades</CollapsedLabel>
        <CollapsedCaret />
      </Collapsed>
      <Collapsed $w={55}>
        <CollapsedIcon>{icons.clipboard}</CollapsedIcon>
        <CollapsedLabel>Portapap...</CollapsedLabel>
        <CollapsedCaret />
      </Collapsed>
      <Collapsed $w={55}>
        <CollapsedIcon>{icons.vista}</CollapsedIcon>
        <CollapsedLabel>Vista</CollapsedLabel>
        <CollapsedCaret />
      </Collapsed>
    </Ribbon>

    <DocRow>
      <DocTab $w={119}>Inicio</DocTab>
      <DocTab $w={119} $pl={10} $active>Dibujo1* {icons.close}</DocTab>
      <PlusGlyph>{icons.plus}</PlusGlyph>
    </DocRow>

    <Viewport>
      <Canvas width="1275" height="494" viewBox="0 180 1275 494">
        <Grid />
        <Drawing />
        <Cursor />
        <Ucs />
      </Canvas>
      <ScrollEdge />
      <ViewLabel>[−][Superior][Estructura alámbrica 2D]</ViewLabel>
      <ViewControls>
        {icons.winMin}
        {icons.winRestore}
        {icons.winClose}
      </ViewControls>
      <Compass>
        <CubeFace>SUPERIOR</CubeFace>
        <CompassMark $x={34} $y={-5}>N</CompassMark>
        <CompassMark $x={73} $y={34}>E</CompassMark>
        <CompassMark $x={34} $y={73}>S</CompassMark>
        <CompassMark $x={-5} $y={34}>O</CompassMark>
      </Compass>
      <ScuBox>SCU <Caret $c="#94999c" /></ScuBox>
      <NavBar>
        <NavCorner />
        {icons.navWheel}
        <NavDot $mt={7} />
        <NavItem $mt={10}>{icons.navHand}</NavItem>
        <NavItem $mt={4}>{icons.navZoom}</NavItem>
        <NavDot $mt={6} />
        <NavItem $mt={6}>{icons.navOrbit}</NavItem>
        <NavDot $mt={7} />
        <NavItem $mt={8}>{icons.navShow}</NavItem>
        <NavCorner $bottom />
      </NavBar>
      <Tooltip $x={519} $w={120}>Precise primer punto:</Tooltip>
      <Tooltip $x={643} $w={60} $input $pad={3}><Selected>3151.9774</Selected></Tooltip>
      <Tooltip $x={707} $w={60} $pad={4}>1454.1846</Tooltip>
      <History>{"Comando:  LINEA"}</History>
      <CommandBar>
        <CommandTools>
          {icons.grip}
          {icons.close}
          <Slot $w={22}>{icons.wrench}</Slot>
        </CommandTools>
        <CommandInput>
          {icons.terminal}
          <CommandCaret $c="#555" />
          <Strong>LINEA</Strong>
          {" Precise primer punto:"}
          <ArrowUp />
        </CommandInput>
      </CommandBar>
    </Viewport>

    <BottomRow>
      <LayoutTabs>
        <LayoutTab $w={62} $active>Modelo</LayoutTab>
        <LayoutTab $w={89}>Presentación1</LayoutTab>
        <LayoutTab $w={94}>Presentación2</LayoutTab>
        <LayoutPlus $w={26}>{icons.plus}</LayoutPlus>
      </LayoutTabs>
      <StatusBar>
        <Stat $w={169} $box $end $fs={10.7}>3151.9774, 1454.1846, 0.0000</Stat>
        <Stat $w={55} $ml={2} $box>MODELO</Stat>
        <Stat $w={24} $ml={2} $on>{icons.grid}</Stat>
        <Stat $w={17}>{icons.dots}</Stat>
        <Stat $w={16}><Caret /></Stat>
        <Stat $w={22} $ml={4} $on>{icons.infer}</Stat>
        <Stat $w={20} $ml={2} $on>{icons.ortho}</Stat>
        <Stat $w={22} $ml={2}>{icons.polar}</Stat>
        <Stat $w={14}><Caret /></Stat>
        <Stat $w={22}>{icons.osnap}</Stat>
        <Stat $w={16}><Caret /></Stat>
        <Stat $w={22} $on>{icons.iso}</Stat>
        <Stat $w={21} $ml={1} $on>{icons.snap}</Stat>
        <Stat $w={15}><Caret /></Stat>
        <Stat $w={24}>{icons.lw}</Stat>
        <Stat $w={21} $ml={3} $on>{icons.annot}</Stat>
        <Stat $w={23}>{icons.annotB}</Stat>
        <Stat $w={22}>{icons.annotC}</Stat>
        <Stat $w={32} $gap={4}>1:1 <Caret /></Stat>
        <Stat $w={22} $ml={2}>{icons.gear}</Stat>
        <Stat $w={16}><Caret /></Stat>
        <Stat $w={23}>{icons.cross}</Stat>
        <Stat $w={23} $ml={2}>{icons.shapes}</Stat>
        <Stat $w={24} $ml={2}>{icons.full}</Stat>
        <Stat $w={22}>{icons.menu}</Stat>
      </StatusBar>
    </BottomRow>
    <BottomBlack />
  </Root>
);

export default App;
